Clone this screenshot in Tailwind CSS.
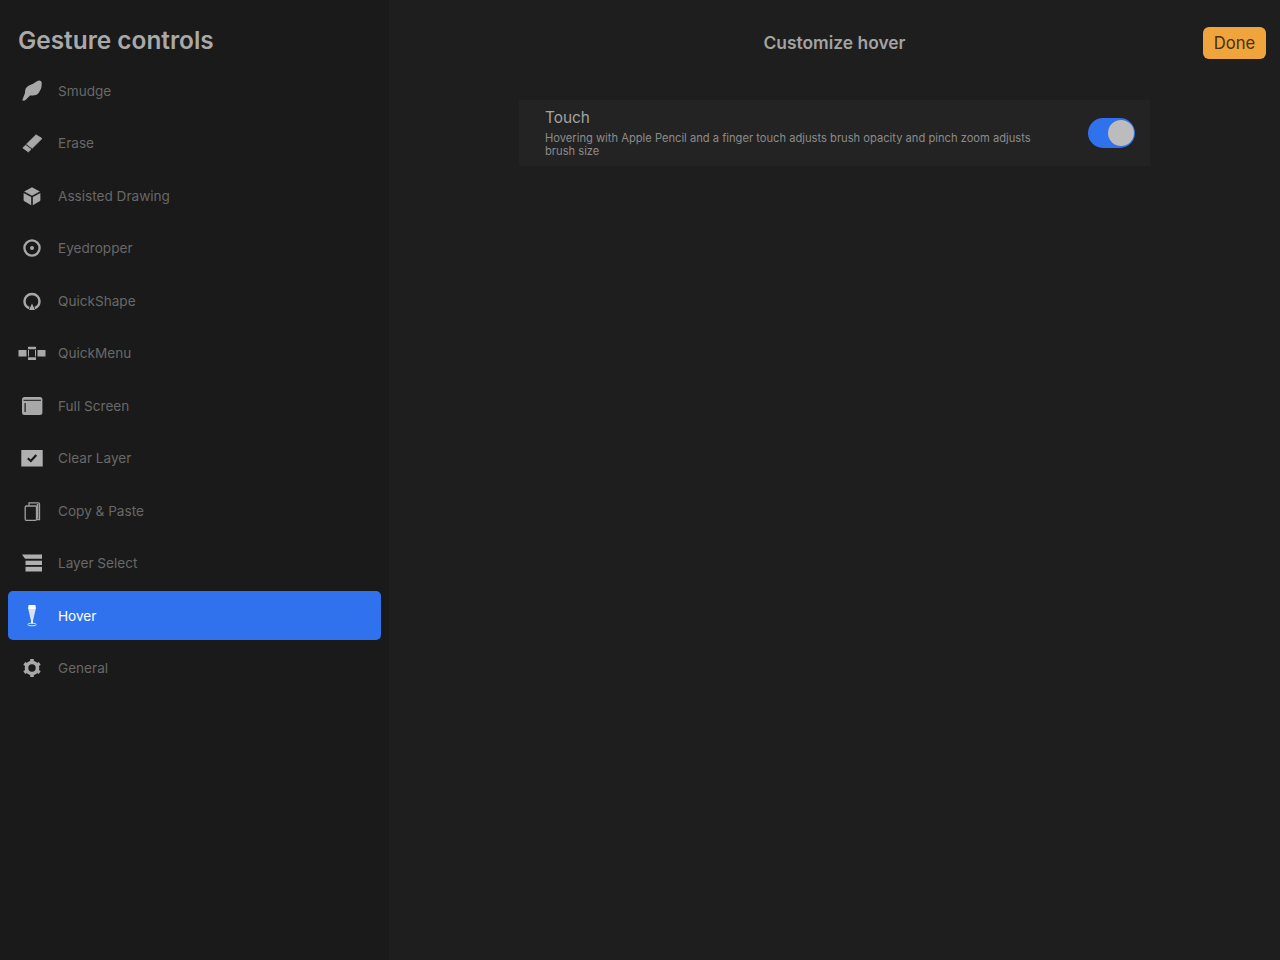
<!DOCTYPE html>
<html lang="en">
<head>
    <meta charset="UTF-8">
    <meta name="viewport" content="width=device-width, initial-scale=1.0">
    <title>Gesture controls</title>
    <script src="https://cdn.jsdelivr.net/npm/@tailwindcss/browser@4"></script>
</head>
<body class="bg-[#1e1e1e] font-[Inter,sans-serif]">
    <div class="flex h-[960px] w-[1280px] overflow-hidden">
        <!-- Sidebar -->
        <aside class="w-[389px] shrink-0 bg-[#1a1a1a] px-2">
            <h1 class="h-[64.5px] pl-[10px] pt-[23.5px] text-[24.4px] leading-[32px] font-semibold text-[#a9a9a9]">Gesture controls</h1>
            <ul class="w-[373px] text-[13.6px] text-[#686868]">
                <li class="flex h-[52.5px] items-center">
                    <span class="mr-[2px] flex w-[48px] justify-center">
                        <svg class="h-6 w-6" viewBox="0 0 24 24" fill="#a8a8a8"><path d="M2.500 20.500 5 14C5 11 5.500 9 7 8 9 6 11.500 5.500 13.500 4.500 15.500 3 17.500 1.500 19.500 1.500 21.500 1.700 22 3.500 21.700 5.500 21.500 8 21.200 10 20 11.500 19 13.500 18 15.500 16 16 14 16.500 11.500 16.500 10 16.500L5.500 21C4.500 22 2.200 22 2.500 20.500z"/></svg>
                    </span>
                    <span>Smudge</span>
                </li>
                <li class="flex h-[52.5px] items-center">
                    <span class="mr-[2px] flex w-[48px] justify-center">
                        <svg class="h-6 w-6" viewBox="0 0 24 24" fill="#a8a8a8" stroke="#a8a8a8" stroke-width=".8" stroke-linejoin="round"><path d="M16 3.800 22 7.500 12.200 17.300 6.600 13.100z"/><path d="M5.600 14.200 11 18.300 8.400 20.900 2.800 16.900z"/></svg>
                    </span>
                    <span>Erase</span>
                </li>
                <li class="flex h-[52.5px] items-center">
                    <span class="mr-[2px] flex w-[48px] justify-center">
                        <svg class="h-6 w-6" viewBox="0 0 24 24" fill="#a8a8a8"><path d="M12 3.300 19.800 7.500 12 11.700 4.200 7.500z"/><path d="M3.600 9 11.200 13v8.300L4.500 17.300c-.5-.3-.9-.7-.9-1.200z"/><path d="M20.400 9 12.800 13v8.300l6.700-4c.5-.3.900-.7.900-1.200z"/></svg>
                    </span>
                    <span>Assisted Drawing</span>
                </li>
                <li class="flex h-[52.5px] items-center">
                    <span class="mr-[2px] flex w-[48px] justify-center">
                        <svg class="h-6 w-6" viewBox="0 0 24 24" fill="none"><circle cx="12" cy="12" r="7.600" stroke="#a8a8a8" stroke-width="2.300"/><circle cx="12" cy="12" r="2" fill="#a8a8a8"/></svg>
                    </span>
                    <span>Eyedropper</span>
                </li>
                <li class="flex h-[52.5px] items-center">
                    <span class="mr-[2px] flex w-[48px] justify-center">
                        <svg class="h-6 w-6" viewBox="0 0 24 24" fill="none"><path d="M9.200 19C6.300 18 4.500 15.500 4.500 12.300 4.500 8.200 7.800 5 12 5s7.500 3.200 7.500 7.300c0 3.200-1.800 5.700-4.700 6.700" stroke="#a8a8a8" stroke-width="2.400"/><path d="M12 14.500l3 6.500H9z" fill="#a8a8a8"/></svg>
                    </span>
                    <span>QuickShape</span>
                </li>
                <li class="flex h-[52.5px] items-center">
                    <span class="mr-[2px] flex w-[48px] justify-center">
                        <svg class="h-[14px] w-[28px]" viewBox="0 0 28 14" fill="#a8a8a8"><rect x=".5" y="4" width="8" height="6.500"/><rect x="19.500" y="4" width="8" height="6.500"/><path d="M10 .7h8v2.600h-8zM10 11.300h8V14h-8zM10 4h1v6.500h-1zM17 4h1v6.500h-1z"/></svg>
                    </span>
                    <span>QuickMenu</span>
                </li>
                <li class="flex h-[52.5px] items-center">
                    <span class="mr-[2px] flex w-[48px] justify-center">
                        <svg class="h-6 w-6" viewBox="0 0 24 24"><rect x="2" y="3" width="20.400" height="18" rx="2.500" fill="#a8a8a8"/><rect x="3.500" y="5.800" width="17.400" height="1" fill="#1a1a1a"/><rect x="4.500" y="9" width="1.200" height="9" fill="#1a1a1a"/></svg>
                    </span>
                    <span>Full Screen</span>
                </li>
                <li class="flex h-[52.5px] items-center">
                    <span class="mr-[2px] flex w-[48px] justify-center">
                        <svg class="h-6 w-6" viewBox="0 0 24 24"><rect x="1.300" y="4" width="21.400" height="16.500" fill="#b0b0b0"/><path d="M7.800 12.300 10.800 15 16.300 9" fill="none" stroke="#1a1a1a" stroke-width="2.200"/></svg>
                    </span>
                    <span>Clear Layer</span>
                </li>
                <li class="flex h-[52.5px] items-center">
                    <span class="mr-[2px] flex w-[48px] justify-center">
                        <svg class="h-6 w-6" viewBox="0 0 24 24" fill="none" stroke="#a0a0a0" stroke-width="1.300"><rect x="5.200" y="7" width="11.300" height="14.300" rx="1.200"/><path d="M9 6.500V3.800h9.500c.6 0 1 .4 1 1V20.500h-3"/><path d="M17.500 5v14.500" stroke-width="1.800"/></svg>
                    </span>
                    <span>Copy &amp; Paste</span>
                </li>
                <li class="flex h-[52.5px] items-center">
                    <span class="mr-[2px] flex w-[48px] justify-center">
                        <svg class="h-6 w-6" viewBox="0 0 24 24" fill="#b0b0b0"><path d="M2 3.500h20v4.300H5z"/><rect x="5.500" y="9.700" width="16.500" height="4.300"/><rect x="5.500" y="15.800" width="16.500" height="4.700"/></svg>
                    </span>
                    <span>Layer Select</span>
                </li>
                <li class="flex h-[52.5px] items-center">
                    <div class="flex h-[49px] w-full items-center rounded-[5px] bg-[#3072ee] text-white">
                        <span class="mr-[2px] flex w-[48px] justify-center">
                            <svg class="h-6 w-6" viewBox="0 0 24 24"><path d="M8.300 2.200c0-.8.500-1.200 1.200-1.200h5c.7 0 1.200.4 1.200 1.200L15.800 5H8.200z" fill="#ffffff"/><path d="M8.300 5h7.400l-2.500 11h-2.400z" fill="#d4e2ff"/><rect x="11" y="16" width="2" height="3.500" fill="#e6eeff"/><ellipse cx="12" cy="20.500" rx="4.300" ry="1.300" fill="none" stroke="#e6eeff" stroke-width=".9"/></svg>
                        </span>
                        <span>Hover</span>
                    </div>
                </li>
                <li class="flex h-[52.5px] items-center">
                    <span class="mr-[2px] flex w-[48px] justify-center">
                        <svg class="h-6 w-6" viewBox="0 0 24 24" fill="none"><circle cx="12" cy="12" r="5.500" stroke="#a8a8a8" stroke-width="3.600"/><path d="M12 3v18M4.200 7.500l15.600 9M4.200 16.500l15.600-9" stroke="#a8a8a8" stroke-width="3.600" stroke-dasharray="3.600 10.800 3.600"/></svg>
                    </span>
                    <span>General</span>
                </li>
            </ul>
        </aside>

        <!-- Main -->
        <main class="flex-1">
            <header class="relative flex h-[85px] justify-center pt-[31px]">
                <h2 class="text-[17.4px] leading-[24px] font-semibold text-[#a3a3a3]">Customize hover</h2>
                <button class="absolute right-[14px] top-[27px] h-[32px] w-[63px] pt-[1px] rounded-[6px] bg-[#f0a43c] text-[16.6px] text-[#4a2f0c]">Done</button>
            </header>
            <section class="mt-[15px] ml-[130px] flex h-[66px] w-[631px] items-center justify-between bg-[#232323] pl-[26px] pr-[15px]">
                <div class="w-[500px] pt-[2px]">
                    <h3 class="mb-[5px] mt-[-1px] text-[15.4px] leading-[18px] text-[#a3a3a3]">Touch</h3>
                    <p class="text-[11.17px] leading-[13px] text-[#8c8c8c]">Hovering with Apple Pencil and a finger touch adjusts brush opacity and pinch zoom adjusts brush size</p>
                </div>
                <div class="flex h-[30px] w-[47px] items-center justify-end rounded-full bg-[#3072ee] pr-[1px]">
                    <div class="h-[26px] w-[26px] rounded-full bg-[#bcbcbc]"></div>
                </div>
            </section>
        </main>
    </div>
</body>
</html>
